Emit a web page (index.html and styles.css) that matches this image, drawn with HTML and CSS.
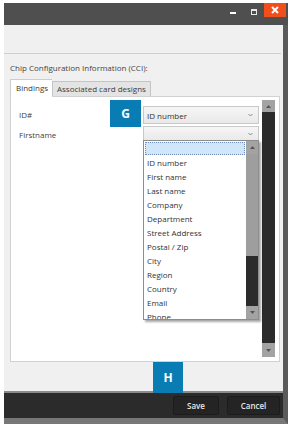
FILE: index.html
```html
<!DOCTYPE html>
<html>
<head>
<meta charset="utf-8">
<link rel="stylesheet" href="styles.css">
</head>
<body>
<div class="window">
  <div class="titlebar">
    <div class="tb-btn tb-min"><span class="min-bar"></span></div>
    <div class="tb-btn tb-max"><span class="max-box"></span></div>
    <div class="tb-btn tb-close">
      <svg width="8" height="8" viewBox="0 0 8 8"><path d="M1 1 L7 7 M7 1 L1 7" stroke="#fff" stroke-width="2"/></svg>
    </div>
  </div>
  <div class="frame">
    <div class="content">
      <div class="rule"></div>
      <div class="caption">Chip Configuration Information (CCI):</div>
      <div class="tabs">
        <div class="tab tab-active">Bindings</div>
        <div class="tab">Associated card designs</div>
      </div>
      <div class="panel">
        <div class="badge badge-g">G</div>
        <div class="fields">
          <div class="label">ID#</div>
          <div class="combo combo-tall">
            <span class="combo-text">ID number</span>
            <svg class="chev" width="5" height="4" viewBox="0 0 5 4"><path d="M0.5 1 L2.5 3 L4.5 1" fill="none" stroke="#8a8a8a" stroke-width="1"/></svg>
          </div>
          <div class="label">Firstname</div>
          <div class="combo combo-short">
            <span class="combo-text"></span>
            <svg class="chev" width="5" height="4" viewBox="0 0 5 4"><path d="M0.5 1 L2.5 3 L4.5 1" fill="none" stroke="#8a8a8a" stroke-width="1"/></svg>
            <div class="popup">
              <div class="list">
                <div class="item item-sel"></div>
                <div class="item">ID number</div>
                <div class="item">First name</div>
                <div class="item">Last name</div>
                <div class="item">Company</div>
                <div class="item">Department</div>
                <div class="item">Street Address</div>
                <div class="item">Postal / Zip</div>
                <div class="item">City</div>
                <div class="item">Region</div>
                <div class="item">Country</div>
                <div class="item">Email</div>
                <div class="item">Phone</div>
              </div>
              <div class="pscroll">
                <div class="arrow"><svg width="5" height="3" viewBox="0 0 5 3"><path d="M0 3 L2.5 0 L5 3 Z" fill="#555"/></svg></div>
                <div class="pthumb"></div>
                <div class="ptrack"></div>
                <div class="arrow"><svg width="5" height="3" viewBox="0 0 5 3"><path d="M0 0 L2.5 3 L5 0 Z" fill="#555"/></svg></div>
              </div>
            </div>
          </div>
        </div>
        <div class="vscroll">
          <div class="arrow"><svg width="5" height="3" viewBox="0 0 5 3"><path d="M0 3 L2.5 0 L5 3 Z" fill="#555"/></svg></div>
          <div class="vtrack"></div>
          <div class="arrow arrow-b"><svg width="5" height="3" viewBox="0 0 5 3"><path d="M0 0 L2.5 3 L5 0 Z" fill="#555"/></svg></div>
        </div>
      </div>
      <div class="badge badge-h">H</div>
    </div>
    <div class="footer">
      <div class="btn btn-save">Save</div>
      <div class="btn btn-cancel">Cancel</div>
    </div>
  </div>
</div>
</body>
</html>
```
FILE: styles.css
```css
* { box-sizing: border-box; }
html, body { margin: 0; padding: 0; background: #ffffff; }
body {
  font-family: "Open Sans", "Noto Sans", sans-serif;
  font-size: 8px;
  color: #3a3a3a;
}
.window {
  margin: 3px 0 0 4px;
  width: 284px;
  height: 421px;
  display: flex;
  flex-direction: column;
}
.titlebar {
  height: 22px;
  background: #4f4f4f;
  display: flex;
  justify-content: flex-end;
  align-items: flex-start;
  padding-right: 2px;
}
.tb-btn {
  width: 21px;
  height: 14px;
  display: flex;
  align-items: center;
  justify-content: center;
}
.min-bar {
  display: block;
  width: 6px;
  height: 2px;
  background: #ffffff;
  margin-top: 5px;
}
.max-box {
  display: block;
  width: 6px;
  height: 6px;
  border: 1px solid #e8e8e8;
  border-top-width: 2px;
  margin-top: 3px;
}
.tb-close {
  width: 22px;
  background: #f04e1a;
}
.frame {
  flex: 1;
  display: flex;
  flex-direction: column;
  border-right: 5px solid #5a5a5a;
  border-bottom: 6px solid #777777;
}
.content {
  position: relative;
  flex: 1;
  background: #f0f0f0;
  display: flex;
  flex-direction: column;
}
.rule {
  margin-top: 28px;
  margin-right: 2px;
  height: 1px;
  background: #cfcfcf;
}
.caption {
  margin: 7px 0 0 6px;
  line-height: 13px;
  height: 13px;
  color: #444;
}
.tabs {
  margin: 5px 0 0 6px;
  display: flex;
  align-items: flex-end;
  height: 17px;
  position: relative;
  z-index: 1;
}
.tab {
  height: 15px;
  line-height: 13px;
  padding: 0 4px 0 4px;
  background: #e4e4e4;
  border: 1px solid #c4c4c4;
  border-bottom: none;
  color: #3a3a3a;
}
.tab-active {
  height: 18px;
  margin-bottom: -1px;
  background: #ffffff;
  padding: 1px 4px 0 5px;
  border-color: #cccccc;
  border-right: none;
  width: 42px;
}
.panel {
  position: relative;
  margin-left: 6px;
  width: 270px;
  height: 266px;
  background: #ffffff;
  border: 1px solid #d2d2d2;
  display: flex;
  padding: 3px 4px 4px 8px;
}
.fields {
  flex: 1;
  display: grid;
  grid-template-columns: 124px 116px;
  grid-auto-rows: min-content;
  align-items: center;
  padding-top: 6px;
  row-gap: 5px;
}
.label {
  line-height: 12px;
  color: #444;
}
.combo {
  position: relative;
  border: 1px solid #c9c9c9;
  background: linear-gradient(#f6f6f6, #e9e9e9);
  display: flex;
  align-items: center;
  justify-content: space-between;
  padding: 0 5px 0 3px;
}
.combo-tall { height: 18px; }
.combo-short { height: 15px; margin-top: -3px; }
.combo-text { color: #333; }
.chev { display: block; }
.popup {
  position: absolute;
  top: 100%;
  left: -1px;
  width: 116px;
  height: 180px;
  background: #ffffff;
  border: 1px solid #8c8c8c;
  box-shadow: 2px 2px 2px rgba(0, 0, 0, 0.35);
  display: flex;
  z-index: 3;
  overflow: hidden;
}
.list {
  flex: 1;
  padding: 1px 1px 0 1px;
}
.item {
  height: 14px;
  line-height: 14px;
  padding-left: 2px;
  color: #333;
  white-space: nowrap;
}
.item-sel {
  height: 13px;
  margin-bottom: 1px;
  background: #cfe6fb;
  border: 1px dotted #6d8fb5;
}
.pscroll {
  width: 12px;
  display: flex;
  flex-direction: column;
}
.arrow {
  height: 13px;
  background: #a3a3a3;
  display: flex;
  align-items: center;
  justify-content: center;
  flex: none;
}
.pthumb {
  height: 102px;
  background: #9e9e9e;
  flex: none;
}
.ptrack {
  flex: 1;
  background: #2b2b2b;
}
.vscroll {
  width: 13px;
  display: flex;
  flex-direction: column;
}
.vscroll .arrow { height: 12px; }
.vscroll .arrow-b { height: 14px; }
.vtrack {
  flex: 1;
  background: #2b2b2b;
}
.badge {
  position: absolute;
  background: #0a7cb4;
  color: #ffffff;
  font-family: "Open Sans", sans-serif;
  font-weight: 700;
  font-size: 12px;
  display: flex;
  align-items: center;
  justify-content: center;
  z-index: 4;
}
.badge-g {
  left: 99px;
  top: 3px;
  width: 31px;
  height: 27px;
}
.badge-h {
  left: 149px;
  top: 337px;
  width: 30px;
  height: 31px;
}
.footer {
  height: 27px;
  background: #2b2b2b;
  border-top: 2px solid #8a8a8a;
  display: flex;
  justify-content: flex-end;
  align-items: center;
  gap: 8px;
  padding-right: 3px;
}
.btn {
  height: 19px;
  background: #242424;
  border: 1px solid #1c1c1c;
  border-radius: 2px;
  color: #e6e6e6;
  font-weight: 600;
  display: flex;
  align-items: center;
  justify-content: center;
}
.btn-save { width: 46px; }
.btn-cancel { width: 53px; }
```
